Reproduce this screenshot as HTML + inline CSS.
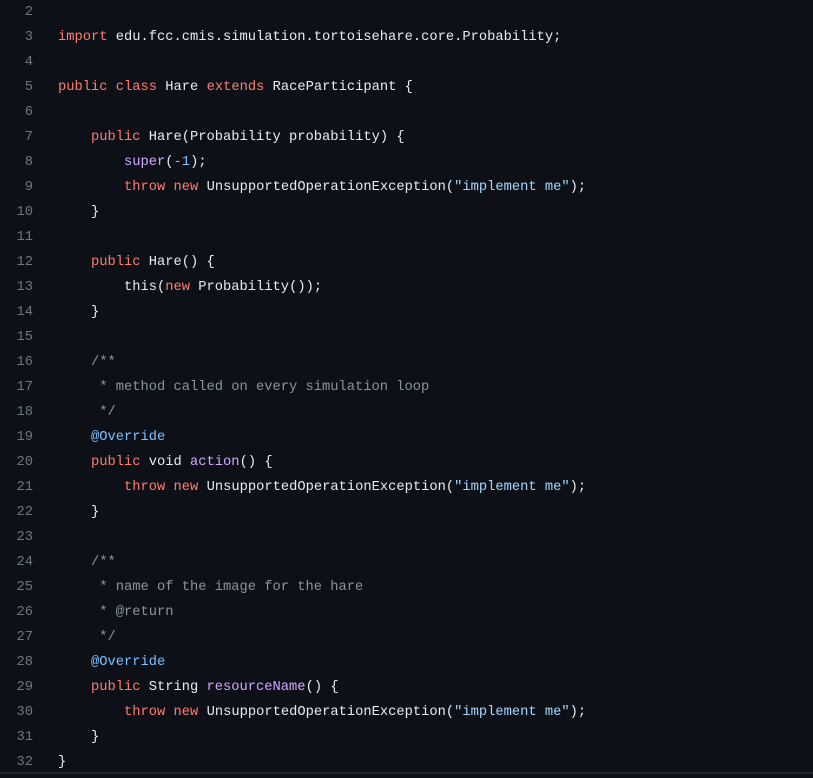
<!DOCTYPE html>
<html><head><meta charset="utf-8"><style>
html,body{margin:0;padding:0;background:#0d1117;width:813px;height:778px;overflow:hidden}
.wrap{position:absolute;top:-0.5px;left:0;width:813px}
.l{height:25px;line-height:25px;white-space:pre;font-family:"Liberation Mono",monospace;font-size:13.75px;color:#e6edf3;position:relative}
.n{position:absolute;left:0;width:33px;text-align:right;color:#6e7681}
.c{position:absolute;left:58px}
.k{color:#ff7b72}.s{color:#a5d6ff}.m{color:#8b949e}.f{color:#d2a8ff}.a{color:#79c0ff}
.bot{position:absolute;left:0;top:772px;width:813px;height:2px;background:#21262d}
</style></head><body>
<div class="wrap">
<div class="l"><span class="n">2</span><span class="c"></span></div>
<div class="l"><span class="n">3</span><span class="c"><span class="k">import</span> edu.fcc.cmis.simulation.tortoisehare.core.Probability;</span></div>
<div class="l"><span class="n">4</span><span class="c"></span></div>
<div class="l"><span class="n">5</span><span class="c"><span class="k">public</span> <span class="k">class</span> Hare <span class="k">extends</span> RaceParticipant {</span></div>
<div class="l"><span class="n">6</span><span class="c"></span></div>
<div class="l"><span class="n">7</span><span class="c">    <span class="k">public</span> Hare(Probability probability) {</span></div>
<div class="l"><span class="n">8</span><span class="c">        <span class="f">super</span>(<span class="a">-1</span>);</span></div>
<div class="l"><span class="n">9</span><span class="c">        <span class="k">throw</span> <span class="k">new</span> UnsupportedOperationException(<span class="s">"implement me"</span>);</span></div>
<div class="l"><span class="n">10</span><span class="c">    }</span></div>
<div class="l"><span class="n">11</span><span class="c"></span></div>
<div class="l"><span class="n">12</span><span class="c">    <span class="k">public</span> Hare() {</span></div>
<div class="l"><span class="n">13</span><span class="c">        this(<span class="k">new</span> Probability());</span></div>
<div class="l"><span class="n">14</span><span class="c">    }</span></div>
<div class="l"><span class="n">15</span><span class="c"></span></div>
<div class="l"><span class="n">16</span><span class="c">    <span class="m">/**</span></span></div>
<div class="l"><span class="n">17</span><span class="c"><span class="m">     * method called on every simulation loop</span></span></div>
<div class="l"><span class="n">18</span><span class="c"><span class="m">     */</span></span></div>
<div class="l"><span class="n">19</span><span class="c">    <span class="a">@Override</span></span></div>
<div class="l"><span class="n">20</span><span class="c">    <span class="k">public</span> void <span class="f">action</span>() {</span></div>
<div class="l"><span class="n">21</span><span class="c">        <span class="k">throw</span> <span class="k">new</span> UnsupportedOperationException(<span class="s">"implement me"</span>);</span></div>
<div class="l"><span class="n">22</span><span class="c">    }</span></div>
<div class="l"><span class="n">23</span><span class="c"></span></div>
<div class="l"><span class="n">24</span><span class="c">    <span class="m">/**</span></span></div>
<div class="l"><span class="n">25</span><span class="c"><span class="m">     * name of the image for the hare</span></span></div>
<div class="l"><span class="n">26</span><span class="c"><span class="m">     * @return</span></span></div>
<div class="l"><span class="n">27</span><span class="c"><span class="m">     */</span></span></div>
<div class="l"><span class="n">28</span><span class="c">    <span class="a">@Override</span></span></div>
<div class="l"><span class="n">29</span><span class="c">    <span class="k">public</span> String <span class="f">resourceName</span>() {</span></div>
<div class="l"><span class="n">30</span><span class="c">        <span class="k">throw</span> <span class="k">new</span> UnsupportedOperationException(<span class="s">"implement me"</span>);</span></div>
<div class="l"><span class="n">31</span><span class="c">    }</span></div>
<div class="l"><span class="n">32</span><span class="c">}</span></div>
</div>
<div class="bot"></div>
</body></html>
